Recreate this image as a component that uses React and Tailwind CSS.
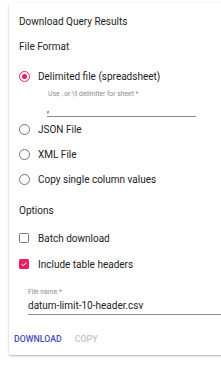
import { useState } from 'react';

const FORMATS = [
  { id: 'json', label: 'JSON File' },
  { id: 'xml', label: 'XML File' },
  { id: 'copy', label: 'Copy single column values' },
];

function Radio({ checked }) {
  return checked ? (
    <span className="w-[11px] h-[11px] rounded-full border-[1.5px] border-[#e91e63] flex items-center justify-center shrink-0">
      <span className="w-[5px] h-[5px] rounded-full bg-[#e91e63]" />
    </span>
  ) : (
    <span className="w-[11px] h-[11px] rounded-full border-[1.5px] border-[#757575] shrink-0" />
  );
}

function Checkbox({ checked }) {
  return checked ? (
    <span className="w-[10px] h-[10px] rounded-[1.5px] bg-[#e91e63] flex items-center justify-center shrink-0">
      <svg viewBox="0 0 10 10" className="w-[8px] h-[8px]">
        <path d="M2 5.2 L4 7.2 L8 3" fill="none" stroke="white" strokeWidth="1.2" />
      </svg>
    </span>
  ) : (
    <span className="w-[10px] h-[10px] rounded-[1.5px] border-[1.5px] border-[#757575] shrink-0" />
  );
}

export default function App() {
  const [format] = useState('delimited');

  return (
    <div className="w-[221px] h-[370px] bg-white overflow-hidden font-['Roboto',sans-serif] text-[#212121]">
      <div className="ml-[9px] mt-[3px] w-[260px] bg-white rounded-[2px] shadow-[0_1px_3px_rgba(0,0,0,0.2),0_1px_1px_rgba(0,0,0,0.12)] pb-[8px]">
        {/* Header */}
        <div className="h-[36px] flex items-center pl-[10px] text-[10px]">Download Query Results</div>
        <div className="h-[14px] flex items-center pl-[10px] text-[10px]">File Format</div>

        {/* Delimited */}
        <div className="mt-[11px] h-[24px] flex items-center pl-[10px] gap-[8px] text-[10px]">
          <Radio checked={format === 'delimited'} />
          <span>Delimited file (spreadsheet)</span>
        </div>
        <div className="ml-[39px] mt-[1px] h-[10px] flex items-center text-[6.8px] text-[#8a8a8a]">
          Use , or \t delimiter for sheet *
        </div>
        <div className="ml-[38px] w-[149px] mt-[1px] h-[17px] border-b border-[#8a8a8a] flex items-end pb-[2px] text-[10px] leading-none">
          ,
        </div>

        {FORMATS.map((f) => (
          <div key={f.id} className="h-[25px] flex items-center pl-[10px] gap-[8px] text-[10px]">
            <Radio checked={format === f.id} />
            <span>{f.label}</span>
          </div>
        ))}

        {/* Options */}
        <div className="mt-[11px] h-[14px] flex items-center pl-[10px] text-[10px]">Options</div>
        <div className="mt-[9px] h-[24px] flex items-center pl-[10px] gap-[9px] text-[10px]">
          <Checkbox checked={false} />
          <span>Batch download</span>
        </div>
        <div className="h-[28px] flex items-center pl-[10px] gap-[9px] text-[10px]">
          <Checkbox checked />
          <span>Include table headers</span>
        </div>

        <div className="ml-[19px] mt-[9px] h-[10px] flex items-center text-[6.8px] text-[#8a8a8a]">File name *</div>
        <div className="ml-[19px] h-[18px] border-b border-[#8a8a8a] flex items-center text-[10px]">
          datum-limit-10-header.csv
        </div>

        {/* Actions */}
        <div className="mt-[18px] h-[14px] flex items-center pl-[5px] gap-[13px] text-[8.8px] font-medium">
          <span className="text-[#3f51b5]">DOWNLOAD</span>
          <span className="text-[#c4c4c4]">COPY</span>
        </div>
      </div>
    </div>
  );
}
